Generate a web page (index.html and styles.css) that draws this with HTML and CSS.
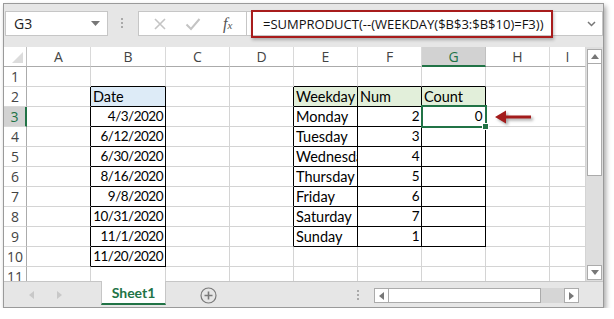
FILE: index.html
```html
<!DOCTYPE html>
<html lang="en">
<head>
  <meta charset="UTF-8">
  <title>Sheet1 - WEEKDAY count</title>
  <link rel="stylesheet" href="styles.css">
</head>
<body>

<div class="xl-window">

  <div class="xl-formula-bar">
    <div class="xl-namebox">
      <span>G3</span>
      <svg class="xl-caret" width="9" height="5" viewBox="0 0 9 5"><path d="M0 0h9L4.5 5z" fill="#777"/></svg>
    </div>
    <div class="xl-vdots"><i></i><i></i><i></i></div>
    <div class="xl-fb-buttons">
      <svg width="14" height="14" viewBox="0 0 14 14"><path d="M2 2l10 10M12 2L2 12" stroke="#c4c4c4" stroke-width="1.6" fill="none"/></svg>
      <svg width="16" height="14" viewBox="0 0 16 14"><path d="M1.5 7.5l4.5 4.5L14.5 2" stroke="#c4c4c4" stroke-width="2" fill="none"/></svg>
      <span class="xl-fx">f<sub>x</sub></span>
    </div>
    <div class="xl-fb-input">
      <span class="xl-formula">=SUMPRODUCT(--(WEEKDAY($B$3:$B$10)=F3))</span>
      <svg class="xl-fb-caret" width="9" height="6" viewBox="0 0 9 6"><path d="M1 1l3.5 3.5L8 1" stroke="#777" stroke-width="1.5" fill="none"/></svg>
    </div>
  </div>

  <div class="xl-sheet">
    <div class="xl-grid-wrap">
      <div id="grid" class="xl-grid"></div>
      <svg class="xl-arrow" width="44" height="22" viewBox="0 0 44 22">
        <path d="M2 9L13 2.5V7.5H38V10.5H13V15.5z" fill="#a31c1c"/>
      </svg>
    </div>
    <div class="xl-vscroll">
      <div class="xl-sbtn xl-sbtn-up"><svg width="8" height="5" viewBox="0 0 8 5"><path d="M0 5L4 0L8 5z" fill="#777"/></svg></div>
      <div class="xl-vthumb"></div>
      <div class="xl-vtrack"></div>
      <div class="xl-sbtn"><svg width="8" height="5" viewBox="0 0 8 5"><path d="M0 0H8L4 5z" fill="#777"/></svg></div>
    </div>
  </div>

  <div class="xl-tabbar">
    <div class="xl-tabnav">
      <svg width="5" height="8" viewBox="0 0 5 8"><path d="M5 0V8L0 4z" fill="#c8c8c8"/></svg>
      <svg width="5" height="8" viewBox="0 0 5 8"><path d="M0 0V8L5 4z" fill="#c8c8c8"/></svg>
    </div>
    <div class="xl-tab">Sheet1</div>
    <svg class="xl-addsheet" width="17" height="17" viewBox="0 0 17 17">
      <circle cx="8.5" cy="8.5" r="7.5" stroke="#7a7a7a" stroke-width="1.2" fill="none"/>
      <path d="M8.5 4.5v8M4.5 8.5h8" stroke="#7a7a7a" stroke-width="1.6"/>
    </svg>
    <div class="xl-vdots xl-vdots-tab"><i></i><i></i><i></i></div>
    <div class="xl-hscroll">
      <div class="xl-sbtn"><svg width="5" height="8" viewBox="0 0 5 8"><path d="M5 0V8L0 4z" fill="#777"/></svg></div>
      <div class="xl-hthumb"></div>
      <div class="xl-htrack"></div>
      <div class="xl-sbtn"><svg width="5" height="8" viewBox="0 0 5 8"><path d="M0 0V8L5 4z" fill="#777"/></svg></div>
    </div>
  </div>

</div>

<script>
  document.addEventListener("DOMContentLoaded", function () {
    const cols = ['A', 'B', 'C', 'D', 'E', 'F', 'G', 'H', 'I'];
    const values = {
      B2: 'Date', B3: '4/3/2020', B4: '6/12/2020', B5: '6/30/2020', B6: '8/16/2020',
      B7: '9/8/2020', B8: '10/31/2020', B9: '11/1/2020', B10: '11/20/2020',
      E2: 'Weekday', F2: 'Num', G2: 'Count',
      E3: 'Monday', E4: 'Tuesday', E5: 'Wednesday', E6: 'Thursday',
      E7: 'Friday', E8: 'Saturday', E9: 'Sunday',
      F3: '2', F4: '3', F5: '4', F6: '5', F7: '6', F8: '7', F9: '1',
      G3: '0'
    };

    function inBox(r, c) {
      const col = cols[c];
      if (col === 'B') return r >= 2 && r <= 10;
      if (col === 'E' || col === 'F' || col === 'G') return r >= 2 && r <= 9;
      return false;
    }

    const grid = document.getElementById('grid');

    function add(cls, text) {
      const el = document.createElement('div');
      el.className = cls;
      if (text) el.innerText = text;
      grid.appendChild(el);
      return el;
    }

    add('xl-corner');
    cols.forEach(function (c) {
      add('xl-colhead' + (c === 'G' ? ' is-active' : ''), c);
    });

    for (let r = 1; r <= 11; r++) {
      add('xl-rowhead' + (r === 3 ? ' is-active' : ''), String(r));
      cols.forEach(function (c, i) {
        const ref = c + r;
        const text = values[ref] || '';
        let cls = 'xl-cell';
        if (inBox(r, i) || inBox(r, i + 1)) cls += ' rb';
        if (inBox(r, i) || inBox(r + 1, i)) cls += ' bb';
        if (r > 2 && /^[0-9\/]+$/.test(text)) cls += ' num';
        if (ref === 'B2') cls += ' fill-blue';
        if (r === 2 && (c === 'E' || c === 'F' || c === 'G')) cls += ' fill-green';
        if (ref === 'G3') cls += ' sel';
        add(cls, text);
      });
    }
  });
</script>

</body>
</html>
```

FILE: styles.css
```css
body {
  margin: 0;
  background-color: #ffffff;
  font-family: 'Open Sans', sans-serif;
  color: #222;
}

.xl-window {
  box-sizing: border-box;
  width: 601px;
  height: 305px;
  margin: 3px 0 0 3px;
  border: 1px solid #9a9a9a;
  background-color: #e6e6e6;
  box-shadow: 2px 3px 5px rgba(0, 0, 0, 0.35);
  display: flex;
  flex-direction: column;
  overflow: hidden;
}

/* formula bar */

.xl-formula-bar {
  height: 43px;
  flex-shrink: 0;
  display: flex;
  align-items: flex-start;
  padding: 7px 0 0 1px;
  box-sizing: border-box;
}

.xl-namebox {
  box-sizing: border-box;
  width: 103px;
  height: 25px;
  background: #fff;
  border: 1px solid #c6c6c6;
  display: flex;
  align-items: center;
  justify-content: space-between;
  padding: 0 7px 0 8px;
  font-size: 14px;
  color: #222;
}

.xl-vdots {
  width: 3px;
  margin: 0 14px 0 13px;
  padding-top: 7px;
  display: flex;
  flex-direction: column;
  gap: 2px;
}

.xl-vdots i {
  width: 2px;
  height: 2px;
  background: #a9a9a9;
}

.xl-fb-buttons {
  box-sizing: border-box;
  width: 108px;
  height: 25px;
  background: #fff;
  border: 1px solid #c6c6c6;
  border-right: none;
  display: flex;
  align-items: center;
  padding-left: 14px;
  gap: 18px;
}

.xl-fx {
  font-family: 'Liberation Serif', serif;
  font-style: italic;
  font-size: 16px;
  color: #555;
  margin-left: 4px;
  line-height: 1;
}

.xl-fx sub {
  font-size: 11px;
  vertical-align: 0;
}

.xl-fb-input {
  box-sizing: border-box;
  flex: 1;
  height: 25px;
  background: #fff;
  border: 1px solid #c6c6c6;
  display: flex;
  align-items: center;
  justify-content: space-between;
  padding: 0 6px 0 4px;
}

.xl-formula {
  box-sizing: border-box;
  height: 28px;
  width: 302px;
  border: 2px solid #a81c1c;
  padding-left: 10px;
  display: flex;
  align-items: center;
  font-size: 13px;
  color: #111;
  white-space: nowrap;
  box-shadow: 1px 2px 3px rgba(0, 0, 0, 0.25);
}

/* sheet */

.xl-sheet {
  height: 234px;
  flex-shrink: 0;
  display: flex;
}

.xl-grid-wrap {
  position: relative;
  width: 582px;
  overflow: hidden;
  background: #fff;
}

.xl-grid {
  display: grid;
  grid-template-columns: 23px 64px 75px 64px 64px 64px 64px 64px 64px 36px;
  grid-auto-rows: 20px;
}

.xl-grid > div {
  box-sizing: border-box;
  white-space: nowrap;
  overflow: hidden;
}

.xl-corner {
  background: #fff;
  border-right: 1px solid #c0c0c0;
  border-bottom: 1px solid #ababab;
  position: relative;
}

.xl-corner::after {
  content: "";
  position: absolute;
  right: 3px;
  bottom: 3px;
  border-style: solid;
  border-width: 0 0 11px 11px;
  border-color: transparent transparent #dcdcdc transparent;
}

.xl-colhead {
  background: #fff;
  border-right: 1px solid #d9d9d9;
  border-bottom: 1px solid #ababab;
  text-align: center;
  font-size: 14px;
  line-height: 19px;
  color: #444;
}

.xl-colhead.is-active {
  background: #d2d2d2;
  color: #217346;
  border-bottom: 2px solid #217346;
  border-right-color: #c0c0c0;
}

.xl-rowhead {
  background: #fff;
  border-right: 1px solid #ababab;
  border-bottom: 1px solid #d9d9d9;
  text-align: center;
  font-size: 14px;
  line-height: 19px;
  color: #444;
}

.xl-rowhead.is-active {
  background: #d2d2d2;
  color: #217346;
  border-right: 2px solid #217346;
}

.xl-cell {
  border-right: 1px solid #d4d4d4;
  border-bottom: 1px solid #d4d4d4;
  font-family: 'Lato', sans-serif;
  font-size: 14.5px;
  line-height: 19px;
  padding: 0 3px 0 2px;
  color: #000;
}

.xl-cell.rb {
  border-right-color: #000;
}

.xl-cell.bb {
  border-bottom-color: #000;
}

.xl-cell.num {
  text-align: right;
  font-size: 13.5px;
  letter-spacing: -0.5px;
  padding-right: 2px;
}

.fill-blue {
  background: #ddebf7;
}

.fill-green {
  background: #e2efda;
}

.xl-grid > .xl-cell.sel {
  position: relative;
  overflow: visible;
  z-index: 2;
  padding-right: 3px;
}

.sel::after {
  content: "";
  position: absolute;
  left: -1px;
  top: -2px;
  width: 66px;
  height: 23px;
  box-sizing: border-box;
  border: 2px solid #217346;
}

.sel::before {
  content: "";
  position: absolute;
  right: -4px;
  bottom: -4px;
  width: 5px;
  height: 5px;
  background: #217346;
  border: 1px solid #fff;
  z-index: 1;
}

.xl-arrow {
  position: absolute;
  left: 489px;
  top: 61px;
  filter: drop-shadow(2px 2px 1.5px rgba(0, 0, 0, 0.35));
}

/* scroll bars */

.xl-vscroll {
  flex: 1;
  background: #dedede;
  display: flex;
  flex-direction: column;
  align-items: center;
  padding: 2px 0 1px 0;
}

.xl-sbtn {
  box-sizing: border-box;
  width: 15px;
  height: 15px;
  background: #fff;
  border: 1px solid #ababab;
  display: flex;
  align-items: center;
  justify-content: center;
  flex-shrink: 0;
}

.xl-vthumb {
  box-sizing: border-box;
  width: 15px;
  height: 112px;
  background: #fff;
  border: 1px solid #ababab;
  border-top: none;
}

.xl-vtrack {
  flex: 1;
}

.xl-tabbar {
  flex: 1;
  border-top: 1px solid #c6c6c6;
  display: flex;
  align-items: flex-start;
}

.xl-tabnav {
  width: 97px;
  display: flex;
  gap: 23px;
  padding: 9px 0 0 25px;
  box-sizing: border-box;
}

.xl-tab {
  box-sizing: border-box;
  width: 65px;
  height: 24px;
  margin-top: -1px;
  background: #fff;
  border-left: 1px solid #c6c6c6;
  border-right: 1px solid #c6c6c6;
  border-bottom: 2px solid #217346;
  text-align: center;
  font-family: 'Lato', sans-serif;
  font-weight: 700;
  font-size: 14px;
  line-height: 23px;
  color: #217346;
}

.xl-addsheet {
  margin: 5px 0 0 34px;
}

.xl-vdots-tab {
  margin: 0 14px 0 140px;
  padding-top: 8px;
}

.xl-hscroll {
  display: flex;
  margin-top: 6px;
  height: 15px;
}

.xl-hthumb {
  box-sizing: border-box;
  width: 152px;
  height: 15px;
  background: #fff;
  border: 1px solid #ababab;
  border-left: none;
}

.xl-htrack {
  width: 23px;
  background: #d6d6d6;
}
```
